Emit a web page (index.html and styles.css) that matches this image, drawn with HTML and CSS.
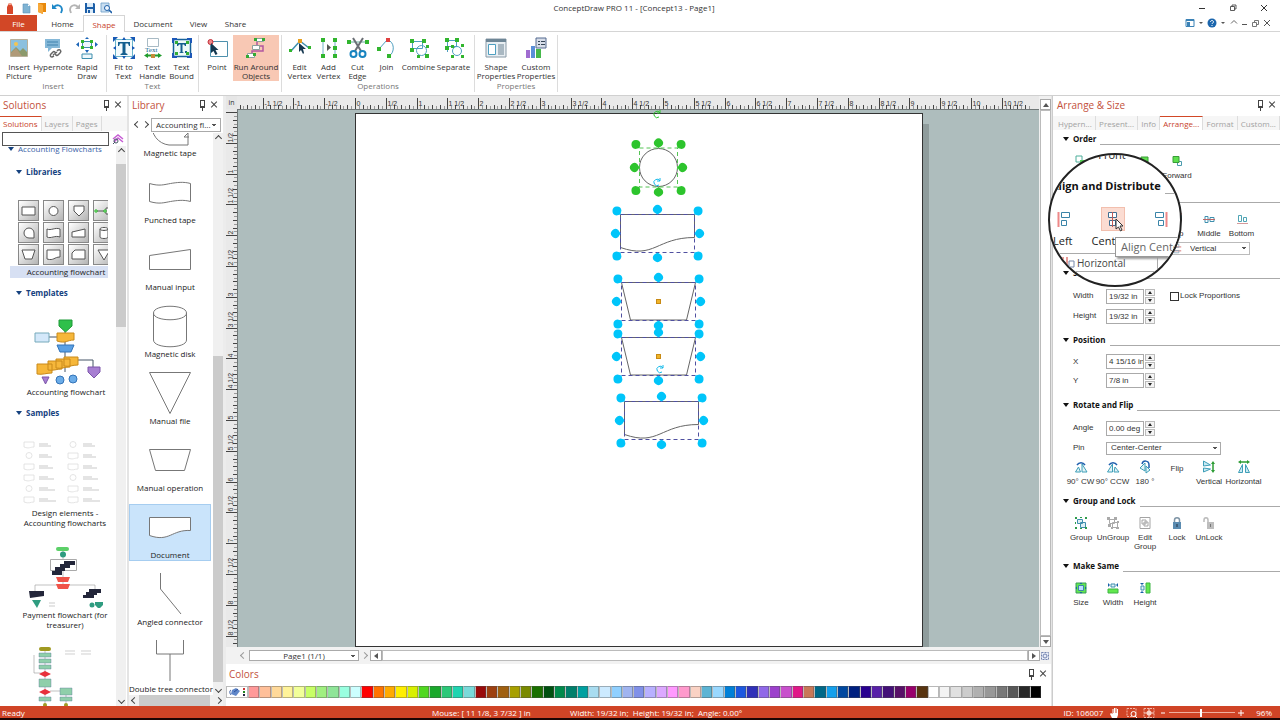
FILE: index.html
```html
<!DOCTYPE html>
<html lang="en">
<head>
<meta charset="UTF-8">
<meta name="viewport" content="width=device-width, initial-scale=1.0">
<title>ConceptDraw PRO 11 - [Concept13 - Page1]</title>
<link rel="stylesheet" href="styles.css">
</head>
<body>

<header class="titlebar">
    <div class="quick">
        <svg viewBox="0 0 12 12"><path d="M3 5l2-4h2l2 4v7H3z" fill="#d8472b"/><path d="M5 1h2l.6 2H4.4z" fill="#f3a08c"/></svg>
        <svg viewBox="0 0 12 12"><path d="M3 2h5l2 2v7H3z" fill="#7fb3d3" stroke="#5a92b8" stroke-width=".6"/><path d="M8 2v2h2z" fill="#fff"/></svg>
        <svg viewBox="0 0 12 12"><path d="M2 1h8v9H7v2L2 10z" fill="#e8890c"/><path d="M2 1l5 2v9l-5-2z" fill="#f7a93a"/></svg>
        <svg viewBox="0 0 12 12"><path d="M2 5c3-3 8-2 8 3l-1 3" fill="none" stroke="#1e88c8" stroke-width="1.8"/><path d="M0 2v5h5z" fill="#1e88c8"/></svg>
        <svg viewBox="0 0 12 12"><path d="M10 5C7 2 2 3 2 8l1 3" fill="none" stroke="#b4b4b4" stroke-width="1.8"/><path d="M12 2v5H7z" fill="#b4b4b4"/></svg>
        <svg viewBox="0 0 12 12"><path d="M1 1h9l1 1v9H1z" fill="#1d5fa8"/><path d="M3 1h6v4H3zM3 7h6v4H3z" fill="#dcebf8"/><path d="M4 8h2v3H4z" fill="#1d5fa8"/></svg>
        <svg viewBox="0 0 12 12"><path d="M1 1h8v9H1z" fill="#c9def0" stroke="#6b9cc6" stroke-width=".8"/><circle cx="7" cy="6" r="2.5" fill="#eef6ff" stroke="#1d5fa8"/><path d="M9 8l3 3" stroke="#1d5fa8" stroke-width="1.6"/></svg>
    </div>
    <div class="title">ConceptDraw PRO 11 - [Concept13 - Page1]</div>
    <div class="winctl">
        <button aria-label="Minimize"><svg viewBox="0 0 8 8"><path d="M1 4.5h6" stroke="#333"/></svg></button>
        <button aria-label="Restore"><svg viewBox="0 0 8 8"><path d="M1.5 2.5h4v4h-4zM3 2.500V1h4v4H5.500" fill="none" stroke="#333" stroke-width=".8"/></svg></button>
        <button aria-label="Close"><svg viewBox="0 0 8 8"><path d="M1 1l6 6M7 1L1 7" stroke="#333"/></svg></button>
    </div>
</header>

<nav class="menu">
    <a href="#" class="file">File</a>
    <a href="#">Home</a>
    <a href="#" class="active">Shape</a>
    <a href="#" class="long">Document</a>
    <a href="#">View</a>
    <a href="#">Share</a>
    <div class="menu-right">
        <svg viewBox="0 0 10 10"><path d="M1 1.500h8v7H1z" fill="#fff" stroke="#3b82b6"/><path d="M1 1h8v2H1zM2 4h3v4H2z" fill="#3b82b6"/></svg>
        <svg viewBox="0 0 10 10"><path d="M3 4h4L5 6z" fill="#555"/></svg>
        <svg viewBox="0 0 10 10"><circle cx="5" cy="5" r="4.500" fill="#1c66ad"/><path d="M3.500 4c0-2 3-2 3 0 0 1-1.500 1-1.500 2M5 7v1" fill="none" stroke="#fff"/></svg>
        <svg viewBox="0 0 10 10"><path d="M3 4h4L5 6z" fill="#555"/></svg>
        <svg viewBox="0 0 10 10"><path d="M2 5.500l3-3 3 3" fill="none" stroke="#666"/></svg>
        <svg viewBox="0 0 10 10"><path d="M2 6.500h5" stroke="#555"/></svg>
        <svg viewBox="0 0 10 10"><path d="M1.500 4.500h4v4h-4zM3.500 4.500v-2h4v4h-2" fill="none" stroke="#777"/></svg>
        <svg viewBox="0 0 10 10"><path d="M2 2l6 6M8 2L2 8" stroke="#555"/></svg>
    </div>
</nav>

<div class="ribbon">
    <div class="group insert">
        <div class="tools">
            <button><svg viewBox="0 0 22 22"><path d="M2.500 2.500h17v17h-17z" fill="#8cc0de" stroke="#b9b09a"/><circle cx="8" cy="7" r="2" fill="#f5c451"/><path d="M3 19v-4l5-5 4 4 3-3 4 4v4z" fill="#8c9a6c"/><path d="M3 19v-3l5-5 6 8z" fill="#b09a78"/></svg>Insert Picture</button>
            <button><svg viewBox="0 0 22 22"><path d="M3 2h15v9H10l-4 4v-4H3z" fill="#85b8d8"/><path d="M5 5h11M5 8h11" stroke="#3e82ae"/><path d="M12 19l-2 1c-2 0-2-2-1-3l2-2c1-1 3 0 2 2M14 17c-1 1 1 2 2 1l2-2c2-2 0-4-2-3l-1 1M11 18l4-3" fill="none" stroke="#666" stroke-width="1.500"/></svg>Hypernote</button>
            <button><svg viewBox="0 0 22 22"><path d="M6.500 4.500h9v6h-9zM6 17h10v4.500H6z" fill="#eef8fc" stroke="#3f8fae"/><path d="M5 3h3v3H5zM14 3h3v3h-3zM5 9h3v3H5zM14 9h3v3h-3z" fill="#31b52e"/><path d="M9 2h4l-2-2zM9 13h4l-2 3zM3 5v5L0 7.500zM19 5v5l3-2.500z" fill="#1d66b8"/></svg>Rapid Draw</button>
        </div>
        <div class="caption">Insert</div>
    </div>
    <div class="group">
        <div class="tools">
            <button><svg viewBox="0 0 22 22"><path d="M2.500 2.500h17v17h-17z" fill="#f4fbfd" stroke="#6ab5cc"/><path d="M5 5h12v4h-1l-1-2.500h-2.500V16l2 1v1H7.500v-1l2-1V6.500H7L6 9H5z" fill="#145f8f"/><path d="M0 0h5L0 5zM22 0v5l-5-5zM0 22v-5l5 5zM22 22h-5l5-5z" fill="#1759b5"/><path d="M9 3h4l-2-3zM9 19h4l-2 3zM0 11l3-2v4zM22 11l-3-2v4z" fill="#1759b5"/></svg>Fit to Text</button>
            <button><svg viewBox="0 0 22 22"><path d="M5.500 1.500h11v8h-11z" fill="#fff" stroke="#a8bac4"/><text x="3" y="15" class="mini-t">Text</text><path d="M4 18.500h14" stroke="#229c2e" stroke-width="2"/><path d="M2 18.500L6 16v5zM20 18.500L16 16v5z" fill="#229c2e"/><path d="M9 17h4v4H9z" fill="#c48c3a"/></svg>Text Handle</button>
            <button><svg viewBox="0 0 22 22"><path d="M2.500 2.500h17v17h-17z" fill="#edfaf8" stroke="#17629a" stroke-width="1.500"/><path d="M6 6h9v3h-1l-1-1.500h-1.500V15l1.500 1H8l1.500-1V7.500H8L7 9H6zM14 14h2v2h-2z" fill="#145f8f"/><path d="M1 1h5v2H3v3H1zM21 1v5h-2V3h-3V1zM1 21v-5h2v3h3v2zM21 21h-5v-2h3v-3h2z" fill="#1d58b8"/><path d="M4 4h3v3H4zM15 4h3v3h-3zM4 15h3v3H4zM15 15h3v3h-3z" fill="#33ae35"/></svg>Text Bound</button>
        </div>
        <div class="caption">Text</div>
    </div>
    <div class="group">
        <div class="tools">
            <button class="w32"><svg viewBox="0 0 22 22"><path d="M4.500 4.500h17v15h-17z" fill="#fff" stroke="#4e90ad"/><circle cx="4.500" cy="5" r="2.500" fill="#e88" stroke="#c22f3a"/><path d="M5 6v10l2.500-2 2 4 2-1-2-4h3z" fill="#14374f"/></svg>Point</button>
            <button class="w46 on"><svg viewBox="0 0 22 22"><path d="M17 3h-5v6h6v5H7v4H4" fill="none" stroke="#b157a0" stroke-width="1.500"/><path d="M11.500 1.500h7v3h-7zM7.500 8.500h7v4h-7zM2.500 16.500h7v4h-7z" fill="#fff" stroke="#8ca09c"/><path d="M9 1h3v3H9zM17 1h3v3h-3zM1 18h3v3H1zM8 16h3v3H8z" fill="#32aa33"/></svg>Run Around Objects</button>
        </div>
    </div>
    <div class="group ops">
        <div class="tools">
            <button><svg viewBox="0 0 22 22"><path d="M2 14L11 4l9 7" fill="none" stroke="#3f8fae" stroke-width="1.500"/><path d="M0 12h3v3H0zM19 9h3v3h-3z" fill="#31b52e"/><path d="M9 2h4v4H9z" fill="#e8a020"/><path d="M10 6v9l2-2 2 4 1-1-1-4h3z" fill="#14374f"/></svg>Edit Vertex</button>
            <button><svg viewBox="0 0 22 22"><path d="M5 4v14M17 4v14" stroke="#74b1c8"/><path d="M9 7v7l4-3.500z" fill="#555"/><path d="M3 1h4v4H3zM15 1h4v4h-4zM3 17h4v4H3zM15 17h4v4h-4zM15 9h4v4h-4z" fill="#31b52e"/></svg>Add Vertex</button>
            <button><svg viewBox="0 0 22 22"><path d="M0 5h22" stroke="#6a9"/><path d="M6 1l8 13M16 1L8 14" stroke="#6b6f75" stroke-width="2"/><path d="M0 3h4v4H0zM18 3h4v4h-4z" fill="#31b52e"/><circle cx="6.500" cy="17" r="3" fill="none" stroke="#1784c0" stroke-width="2"/><circle cx="15.500" cy="17" r="3" fill="none" stroke="#1784c0" stroke-width="2"/></svg>Cut Edge</button>
            <button><svg viewBox="0 0 22 22"><path d="M3 12l8-9c8 1 8 13 2 16" fill="none" stroke="#4e9fc0"/><path d="M1 10h4v4H1zM11 17h4v4h-4z" fill="#31b52e"/><path d="M10 1h4v4h-4z" fill="#e04040"/></svg>Join</button>
            <button class="w34"><svg viewBox="0 0 22 22"><path d="M4.500 4.500h10v7h-10z" fill="none" stroke="#4e9fc0"/><circle cx="13.500" cy="13.500" r="5" fill="none" stroke="#4e9fc0"/><path d="M2 2h4v4H2zM14 2h4v4h-4zM2 11h4v4H2zM18 8h3v3h-3zM9 18h3v3H9zM17 17h4v4h-4z" fill="#31b52e"/></svg>Combine</button>
            <button class="w34"><svg viewBox="0 0 22 22"><path d="M4.500 3.500h9v6h-9zM4.500 9v6" fill="none" stroke="#4e9fc0"/><circle cx="14" cy="14" r="4.500" fill="none" stroke="#4e9fc0"/><path d="M2 1h4v4H2zM12 1h4v4h-4zM2 9h4v4H2zM18 7h3v3h-3zM8 8h3v3H8zM8 18h3v3H8zM18 18h3v3h-3z" fill="#31b52e"/></svg>Separate</button>
        </div>
        <div class="caption">Operations</div>
    </div>
    <div class="group props">
        <div class="tools">
            <button class="w40"><svg viewBox="0 0 22 22"><path d="M1 2h20v18H1z" fill="#e8eef2" stroke="#8899a6"/><path d="M1 2h20v3H1z" fill="#6e8696"/><path d="M3.500 7.500h7v10h-7z" fill="#fff" stroke="#4e9fc0"/><path d="M13 7h6v11h-6z" fill="#a9b8c2"/></svg>Shape Properties</button>
            <button class="w40"><svg viewBox="0 0 22 22"><path d="M11 1h10v10H11z" fill="#d7dde8" stroke="#546a90"/><path d="M13 4h2v1h-2zM13 7h2v1h-2zM16 4h4v1h-4zM16 7h4v1h-4z" fill="#345"/><path d="M1 13h4v8H1z" fill="#a06cd0"/><path d="M6 9h4v12H6z" fill="#5a8fd8"/><path d="M11 12h5v9h-5z" fill="#46b84a"/></svg>Custom Properties</button>
        </div>
        <div class="caption">Properties</div>
    </div>
</div>

<main class="work">
    <aside class="solutions">
        <div class="panel-head"><h2>Solutions</h2><button class="pin" aria-label="Pin"></button><button class="close" aria-label="Close"></button></div>
        <div class="tabs"><a href="#" class="sel">Solutions</a><a href="#">Layers</a><a href="#">Pages</a></div>
        <div class="search">
            <input type="text" aria-label="Search">
            <svg viewBox="0 0 12 12"><path d="M1 6l5-4 5 4M2 9l4-4 5 4" fill="none" stroke="#c65bd4" stroke-width="1.500"/><circle cx="4" cy="8" r="2" fill="none" stroke="#456"/><path d="M3 9l-2 2" stroke="#456"/></svg>
        </div>
        <div class="scroller">
            <div class="tree">
                <div class="branch top">Accounting Flowcharts</div>
                <div class="branch">Libraries</div>
                <div class="tiles" id="tiles"></div>
                <div class="name lit">Accounting flowchart</div>
                <div class="branch">Templates</div>
                <svg class="thumb tall" viewBox="0 0 80 68">
                    <path d="M37 8v40M20 19h10M45 42h20v10M37 48v6" fill="none" stroke="#456"/>
                    <path d="M31 2h13v6l-6.500 6-6.500-6z" fill="#2fc04a" stroke="#1f9a38"/>
                    <path d="M7 15h14v9H7z" fill="#d4e8fa" stroke="#7ab"/>
                    <path d="M29 15h17v7c-7 0-8 4-17 1z" fill="#f6b73a" stroke="#c98a1a"/>
                    <path d="M29 27h17l-3 7H32z" fill="#5aa0e4" stroke="#3474b8"/>
                    <path d="M36 39h14v8c-6 0-8 2-14 1zM28 41h14v8c-6 0-8 2-14 1zM20 43h14v8c-6 0-8 2-14 1zM9 46h15v9c-6 0-9 2-15 1z" fill="#f6b73a" stroke="#c98a1a"/>
                    <path d="M60 49h12v5l-6 6-6-6zM14 59h7l-3.500 7z" fill="#a77fd2" stroke="#7c55aa"/>
                    <circle cx="32" cy="62" r="4" fill="#6bace8" stroke="#3474b8"/><circle cx="45" cy="61" r="4" fill="#6bace8" stroke="#3474b8"/>
                </svg>
                <div class="name">Accounting flowchart</div>
                <div class="branch">Samples</div>
                <svg class="thumb design" viewBox="0 0 84 68" id="design"></svg>
                <div class="name two">Design elements - Accounting flowcharts</div>
                <svg class="thumb pay" viewBox="0 0 80 62">
                    <path d="M10 45v-6h60v6M38 4v36" fill="none" stroke="#999" stroke-width=".6"/>
                    <rect x="31" y="1" width="13" height="4" rx="2" fill="#5cd068"/><circle cx="38" cy="8.500" r="3" fill="#2f9c80"/>
                    <path d="M25.500 13.500h26v11h-26z" fill="#fff" stroke="#aaa"/>
                    <path d="M39 15h11v4H39zM35 18h10v4H35zM30 21h10v4H30zM27 25h10v4H27zM4 45h15v5L5 52zM64 43h12v4H64zM61 46h11v3H61zM58 49h11v3H58z" fill="#23263a"/>
                    <path d="M31 31h14l-2 5H33zM31 38h14l-2 5H33z" fill="#f05348"/>
                    <path d="M7 54h9l-4 8zM70 56h8v3l-4 4-4-4z" fill="#2f9c80"/><circle cx="67" cy="59" r="2.500" fill="#2f9c80"/><path d="M24 57h6M24 60h6" stroke="#aaa" stroke-width=".6"/>
                </svg>
                <div class="name two">Payment flowchart (for treasurer)</div>
                <svg class="thumb last" viewBox="0 0 80 60">
                    <path d="M20 2v58M9 9v18h9M25 45h16v12" fill="none" stroke="#999" stroke-width=".6"/>
                    <rect x="14" y="1" width="12" height="4" rx="2" fill="#a09a22"/>
                    <path d="M14 7h12v4H14zM14 13h12v4H14zM14 19h12v4H14zM14 33h12v8H14zM14 51h12v4H14zM35 42h12v7H35zM35 51h12v4H35z" fill="#8fcfaa" stroke="#579" stroke-width=".4"/>
                    <path d="M14 28l6-3 6 3-6 3zM14 46l6-3 6 3-6 3z" fill="#e8303c"/>
                    <circle cx="20" cy="59" r="2" fill="#a09a22"/><circle cx="41" cy="59" r="2" fill="#a09a22"/>
                    <path d="M40 5h10M40 8h10M56 5h10M56 8h10" stroke="#bbb" stroke-width=".7"/>
                </svg>
            </div>
            <div class="vbar s1"><button class="up" aria-label="Up"></button><i></i><button class="down" aria-label="Down"></button></div>
        </div>
    </aside>

    <aside class="library">
        <div class="panel-head"><h2>Library</h2><button class="pin" aria-label="Pin"></button><button class="close" aria-label="Close"></button></div>
        <div class="libnav">
            <button class="left" aria-label="Previous"></button><button class="right" aria-label="Next"></button>
            <select aria-label="Library"><option>Accounting fl...</option></select>
        </div>
        <div class="scroller">
            <div class="shapes">
                <div class="shape"><svg viewBox="0 0 44 44"><path d="M41 29h-1v13H21A19 19 0 1 1 41 29l-5 5h5"/></svg>Magnetic tape</div>
                <div class="shape"><svg viewBox="0 0 44 44"><path d="M1.500 13.500c10 3 15 1 21 0s13-2 20 0v18c-7-2-14-1-20 0s-11 3-21 0z"/></svg>Punched tape</div>
                <div class="shape"><svg viewBox="0 0 44 44"><path d="M1.500 18.500l41-6v20h-41z"/></svg>Manual input</div>
                <div class="shape"><svg viewBox="0 0 44 44"><path d="M5.500 9v27c0 9 33 9 33 0V9c0-9-33-9-33 0 0 9 33 9 33 0"/></svg>Magnetic disk</div>
                <div class="shape"><svg viewBox="0 0 44 44"><path d="M1.500 1.500h41l-20.500 41z"/></svg>Manual file</div>
                <div class="shape"><svg viewBox="0 0 44 44"><path d="M1.500 11.500h41l-6 21h-29z"/></svg>Manual operation</div>
                <div class="shape picked"><svg viewBox="0 0 44 44"><path d="M1.500 12.500h41v13c-19-1-21 12-41 5z" fill="#fff"/></svg>Document</div>
                <div class="shape"><svg viewBox="0 0 44 44"><path d="M12.500 1v16L33 42" fill="none"/></svg>Angled connector</div>
                <div class="shape"><svg viewBox="0 0 44 44"><path d="M8.500 1v14h27V1M22 15v27" fill="none"/></svg>Double tree connector</div>
            </div>
            <div class="vbar s2"><button class="up" aria-label="Up"></button><i></i><button class="down" aria-label="Down"></button></div>
        </div>
        <div class="hbar"><button class="left" aria-label="Left"></button><i></i><button class="right" aria-label="Right"></button></div>
    </aside>

    <section class="center">
        <div class="drawing">
            <div class="unit">in</div>
            <svg class="hruler" id="hruler"></svg>
            <div class="vbar box"><button class="up" aria-label="Up"></button><i></i><button class="down" aria-label="Down"></button></div>
            <svg class="vruler" id="vruler"></svg>
            <svg class="canvas" id="canvas"></svg>
        </div>
        <div class="pagebar">
            <button class="left" aria-label="Previous page"></button>
            <select aria-label="Page"><option>Page1 (1/1)</option></select>
            <button class="right" aria-label="Next page"></button>
            <div class="track"><button aria-label="Scroll left"><svg viewBox="0 0 8 8"><path d="M6 1v6L2 4z" fill="#555"/></svg></button><span></span><button aria-label="Scroll right"><svg viewBox="0 0 8 8"><path d="M2 1v6l4-3z" fill="#555"/></svg></button></div>
            <svg class="fit" viewBox="0 0 10 10"><path d="M1.500 1.500h7v7h-7z" fill="#e7ecf7" stroke="#7484b0" stroke-dasharray="2 1"/><circle cx="5" cy="5" r="2" fill="none" stroke="#7484b0"/></svg>
        </div>
        <div class="colors">
            <div class="panel-head"><h2>Colors</h2><button class="pin" aria-label="Pin"></button><button class="close" aria-label="Close"></button></div>
            <div class="palette">
                <button class="fill" aria-label="Fill"><svg viewBox="0 0 20 10"><path d="M5 3l4-2 4 3-4 5-5-2z" fill="#5f86c8"/><path d="M4 3c-2 1-1 4 0 5M7 5l4-3" fill="none" stroke="#2c509a"/><path d="M16 1h2v2h-2z" fill="#c33"/><path d="M16 4h2v2h-2z" fill="#282"/><path d="M16 7h2v2h-2z" fill="#224"/></svg></button>
                <div class="swatches" id="swatches"></div>
            </div>
        </div>
    </section>

    <aside class="arrange">
        <div class="panel-head"><h2>Arrange &amp; Size</h2><button class="pin" aria-label="Pin"></button><button class="close" aria-label="Close"></button></div>
        <div class="tabs"><a href="#">Hypern...</a><a href="#">Present...</a><a href="#">Info</a><a href="#" class="sel">Arrange...</a><a href="#">Format</a><a href="#">Custom...</a></div>

        <section class="order">
            <h3>Order</h3>
            <div class="cells">
                <button aria-label="Back"><svg viewBox="0 0 14 14"><path d="M2 2h6v6H2z" fill="#fff" stroke="#4cae9a"/><path d="M6 6h6v6H6z" fill="#58cf58"/></svg></button>
                <span></span>
                <button aria-label="Backward"><svg viewBox="0 0 14 14"><path d="M3 3h7v7H3z" fill="#5ee04e" stroke="#3a9c38"/></svg></button>
                <button><svg viewBox="0 0 14 14"><path d="M7.500 7.500h4v4h-4z" fill="#fff" stroke="#4c9cae"/><path d="M3 2.500h6v6H3z" fill="#5ee04e" stroke="#3a9c38"/></svg>Forward</button>
            </div>
        </section>

        <section class="align">
            <h3>Align and Distribute</h3>
            <div class="cells">
                <span></span><span></span><span></span>
                <button><svg viewBox="0 0 14 14"><path d="M2 2h10" stroke="#c55"/><path d="M3.500 3.500h3v6h-3zM8.500 3.500h3v4h-3z" fill="none" stroke="#3f8fae"/></svg>Top</button>
                <button><svg viewBox="0 0 14 14"><path d="M3 4.500h3v6H3zM8 5.500h4v4H8z" fill="none" stroke="#3f8fae"/><path d="M1 7.500h12" stroke="#b66"/></svg>Middle</button>
                <button><svg viewBox="0 0 14 14"><path d="M3.500 3.500h3v6h-3zM8.500 5.500h3v4h-3z" fill="none" stroke="#4fa5b5"/><path d="M2 11.500h11" stroke="#d59a9a"/></svg>Bottom</button>
            </div>
            <div class="distribute">
                <div class="combo"><svg viewBox="0 0 14 14"><path d="M1 5h12M1 10h12" stroke="#c55"/><path d="M4 1.500h6v4H4zM4 9.500h6v3H4z" fill="none" stroke="#8ab"/></svg><select aria-label="Distribute vertically"><option>Vertical</option></select></div>
            </div>
        </section>

        <section class="size">
            <h3>Size</h3>
            <div class="field"><label for="width">Width</label><span class="spin"><input id="width" value="19/32 in"><i><button aria-label="Up"></button><button aria-label="Down"></button></i></span><label class="lock"><input type="checkbox">Lock Proportions</label></div>
            <div class="field"><label for="height">Height</label><span class="spin"><input id="height" value="19/32 in"><i><button aria-label="Up"></button><button aria-label="Down"></button></i></span></div>
        </section>

        <section class="position">
            <h3>Position</h3>
            <div class="field"><label for="posx">X</label><span class="spin"><input id="posx" value="4 15/16 in"><i><button aria-label="Up"></button><button aria-label="Down"></button></i></span></div>
            <div class="field"><label for="posy">Y</label><span class="spin"><input id="posy" value="7/8 in"><i><button aria-label="Up"></button><button aria-label="Down"></button></i></span></div>
        </section>

        <section class="rotate">
            <h3>Rotate and Flip</h3>
            <div class="field"><label for="angle">Angle</label><span class="spin"><input id="angle" value="0.00 deg"><i><button aria-label="Up"></button><button aria-label="Down"></button></i></span></div>
            <div class="field"><label for="pin">Pin</label><select id="pin"><option>Center-Center</option></select></div>
            <div class="cells">
                <button><svg viewBox="0 0 14 14"><path d="M1.500 12l3-5 2 5zM8 12V4l5 8z" fill="#e3f4f8" stroke="#3f9fb8"/><path d="M3 5c2-3 6-3 8 0" fill="none" stroke="#1f5fae" stroke-width="1.500"/></svg>90° CW</button>
                <button><svg viewBox="0 0 14 14"><path d="M1.500 12l5-8v8zM8 12l1-5 4 5z" fill="#e3f4f8" stroke="#3f9fb8"/><path d="M3 5c2-3 6-3 8 0" fill="none" stroke="#1f5fae" stroke-width="1.500"/></svg>90° CCW</button>
                <button><svg viewBox="0 0 14 14"><path d="M2 8l5-5v8zM8 6v7l4-3z" fill="#e3f4f8" stroke="#3f9fb8"/><path d="M4 4c1-4 7-4 7 1v3" fill="none" stroke="#1f5fae" stroke-width="1.500"/></svg>180 °</button>
                <span class="word">Flip</span>
                <button><svg viewBox="0 0 14 14"><path d="M1.500 1v5l7-1zM1.500 12V8l7 1z" fill="#c9eaf4" stroke="#3f9fb8"/><path d="M11 3v8" stroke="#2c9c34" stroke-width="1.500"/><path d="M9 4h4l-2-3zM9 10h4l-2 3z" fill="#2c9c34"/></svg>Vertical</button>
                <button><svg viewBox="0 0 14 14"><path d="M1.500 12.500l4-8v8zM12.500 12.500l-4-8v8z" fill="#c9eaf4" stroke="#3f9fb8"/><path d="M3 2h8" stroke="#2c9c34" stroke-width="1.500"/><path d="M4 0v4L1 2zM10 0v4l3-2z" fill="#2c9c34"/></svg>Horizontal</button>
            </div>
        </section>

        <section class="grouping">
            <h3>Group and Lock</h3>
            <div class="cells">
                <button><svg viewBox="0 0 14 14"><path d="M3.500 3.500h5v4h-5zM6.500 6.500h5v5h-5z" fill="#dff1f4" stroke="#3f8fae"/><path d="M1 1h2v2H1zM6 1h2v1H6zM11 1h2v2h-2zM1 11h2v2H1zM11 11h2v2h-2zM1 6h1v2H1zM6 12h2v1H6z" fill="#2d9c4a"/></svg>Group</button>
                <button><svg viewBox="0 0 14 14"><path d="M3.500 3.500h5v4h-5zM6.500 6.500h5v5h-5z" fill="none" stroke="#aaa"/><path d="M1 1h3v3H1zM8 1h3v3H8zM2 8h3v3H2zM11 5h2v2h-2zM10 11h3v2h-3zM5 11h2v2H5z" fill="#aaa"/></svg>UnGroup</button>
                <button><svg viewBox="0 0 14 14"><path d="M2 1.500h10v11H2zM4 4h4v4H4zM6 6h4v4H6z" fill="none" stroke="#a4a4a4"/></svg>Edit<br>Group</button>
                <button><svg viewBox="0 0 14 14"><path d="M4.500 6V4c0-3 5-3 5 0v2" fill="none" stroke="#7f95a6" stroke-width="1.500"/><path d="M3 6h8v7H3z" fill="#5b8bb0"/><path d="M6.500 8h1v3h-1z" fill="#234"/></svg>Lock</button>
                <button><svg viewBox="0 0 14 14"><path d="M2 6V4c0-3 4-3 4 0v2" fill="none" stroke="#bbb" stroke-width="1.500"/><path d="M5 6h7v7H5z" fill="#bdbdbd"/><path d="M8 8h1v3H8z" fill="#777"/></svg>UnLock</button>
            </div>
        </section>

        <section class="same">
            <h3>Make Same</h3>
            <div class="cells">
                <button><svg viewBox="0 0 14 14"><path d="M2 2h10v10H2z" fill="#62e84e" stroke="#3a9c5a"/><path d="M4.500 4.500h5v5h-5z" fill="#bdf" stroke="#3c86a8"/><path d="M5.500 3h3L7 1.500zM5.500 11h3L7 12.500zM3 5.500v3L1.500 7zM11 5.500v3L12.500 7z" fill="#1760a8"/></svg>Size</button>
                <button><svg viewBox="0 0 14 14"><path d="M2 8h10v4H2z" fill="#62e84e" stroke="#3fb545"/><path d="M5 3h4v3H5z" fill="#e3f4f8" stroke="#3f8fae"/><path d="M2 2v4l2-2zM12 2v4l-2-2z" fill="#1760a8"/></svg>Width</button>
                <button><svg viewBox="0 0 14 14"><path d="M8 2h4v10H8z" fill="#62e84e" stroke="#3fb545"/><path d="M3 5h3v4H3z" fill="#e3f4f8" stroke="#3f8fae"/><path d="M2 2h4L4 4zM2 12h4l-2-2z" fill="#1760a8"/></svg>Height</button>
            </div>
        </section>

        <div class="lens">
            <div class="lens-front">Front</div>
            <div class="lens-title">Align and Distribute</div>
            <div class="lens-icons">
                <span><svg viewBox="0 0 18 18"><path d="M2.500 2v15" stroke="#e88" stroke-width="2"/><path d="M5.500 2.500h8v5h-8zM5.500 10.500h5v5h-5z" fill="#fff" stroke="#3a84a8"/></svg></span>
                <span class="hot"><svg viewBox="0 0 18 18"><path d="M4.500 2.500h8v5h-8zM5.500 10.500h6v5h-6z" fill="#fff" stroke="#3f6f92"/><path d="M8.500 2v15" stroke="#c25a55"/></svg></span>
                <span><svg viewBox="0 0 18 18"><path d="M14.500 2v15" stroke="#e88" stroke-width="2"/><path d="M3.500 2.500h8v5h-8zM6.500 10.500h5v5h-5z" fill="#fff" stroke="#3a84a8"/></svg></span>
            </div>
            <div class="lens-labels"><span>Left</span><span>Center</span></div>
            <div class="lens-combo"><svg viewBox="0 0 16 16"><path d="M4 2v12M8 2v12" stroke="#e07a74" stroke-width="1.500"/><path d="M10 6h5v6h-5z" fill="#fff" stroke="#78a"/></svg>Horizontal</div>
            <div class="tip">Align Center</div>
            <svg class="cursor" viewBox="0 0 10 14"><path d="M1 1v10l2.500-2 2 4 1.500-1-2-4h3z" fill="#fff" stroke="#333"/></svg>
        </div>
    </aside>
</main>

<footer class="status">
    <span>Ready</span>
    <span>Mouse: [ 11 1/8, 3 7/32 ] in</span>
    <span class="dims">Width: 19/32 in;&nbsp; Height: 19/32 in;&nbsp; Angle: 0.00°</span>
    <span class="ident">ID: 106007</span>
    <svg viewBox="0 0 12 12"><path d="M3 11L1 7l1-1 1.500 1V2h1v4h.5V1h1v5h.5V1h1v5H8V2h1v6l-1 3z" fill="#fff"/></svg>
    <svg viewBox="0 0 12 12"><path d="M1 1.500h9v8H1z" fill="none" stroke="#f3b5a6" stroke-dasharray="2 1"/><circle cx="7.500" cy="7" r="2.500" fill="none" stroke="#fff"/><path d="M9 9l2 2" stroke="#fff"/></svg>
    <svg viewBox="0 0 12 12"><path d="M1 1.500h10v9H1z" fill="none" stroke="#f3b5a6" stroke-dasharray="2 1"/><circle cx="6" cy="6" r="2.500" fill="#f9d3ca"/><path d="M6 1v10M1 6h10" stroke="#f9d3ca"/></svg>
    <button aria-label="Zoom out"><svg viewBox="0 0 6 6"><path d="M1 3h4" stroke="#fff"/></svg></button>
    <input type="range" min="0" max="100" value="48" aria-label="Zoom">
    <button aria-label="Zoom in"><svg viewBox="0 0 6 6"><path d="M0 3h6M3 0v6" stroke="#fff"/></svg></button>
    <span class="pct">96%</span>
</footer>

<script src="script.js"></script>
</body>
</html>
```

FILE: styles.css
```css
* {
    box-sizing: border-box;
}
html, body {
    height: 100%;
}
body {
    margin: 0;
    display: flex;
    flex-direction: column;
    font: 8px/10px "Open Sans", "Noto Sans", sans-serif;
    color: #333;
    background-color: #fff;
    border-bottom: 2px solid #1c0503;
    overflow: hidden;
}
a {
    color: inherit;
    text-decoration: none;
}
button {
    padding: 0;
    border: 0;
    background: none;
    font: inherit;
    color: inherit;
}
input, select {
    margin: 0;
    font: inherit;
    color: inherit;
}
select {
    appearance: none;
    background-color: #fff;
    background-image: linear-gradient(#555, #555), linear-gradient(#555, #555);
    background-repeat: no-repeat;
    background-position: right 3px top 4px, right 4px top 5px;
    background-size: 4px 1px, 2px 1px;
    border: 1px solid #aaa;
    border-radius: 0;
    padding: 0 4px;
}
h2, h3 {
    margin: 0;
}
svg {
    display: block;
}

/* title and menu */
.titlebar {
    display: grid;
    grid-template-columns: 1fr auto 1fr;
    align-items: center;
    height: 15px;
    padding-right: 12px;
}
.quick {
    display: flex;
    gap: 4px;
    padding-left: 4px;
}
.quick svg {
    width: 12px;
    height: 12px;
}
.winctl {
    display: flex;
    justify-content: flex-end;
    gap: 23px;
}
.winctl svg {
    width: 8px;
    height: 8px;
}
.menu {
    display: flex;
    align-items: stretch;
    height: 17px;
    border-bottom: 1px solid #d5d5d5;
    line-height: 18px;
}
.menu a {
    width: 37px;
    text-align: center;
}
.menu .file {
    background-color: #d24726;
    color: #fff;
    margin-right: 7px;
}
.menu .active {
    width: 42px;
    height: 17px;
    margin: 0 2px;
    background-color: #fff;
    border: 1px solid #d5d5d5;
    border-bottom: 0;
    color: #c8432a;
    line-height: 17px;
}
.menu .long {
    width: 52px;
    margin-right: 1px;
}
.menu-right {
    display: flex;
    align-items: center;
    gap: 1px;
    margin-left: auto;
    padding-right: 8px;
}
.menu-right svg {
    width: 10px;
    height: 10px;
}

/* ribbon */
.ribbon {
    display: flex;
    height: 64px;
    padding-top: 3px;
    border-bottom: 1px solid #d0d0d0;
}
.group {
    height: 57px;
    padding: 0 2px;
    border-right: 1px solid #dcdcdc;
}
.ops {
    padding: 0 3px;
}
.props {
    padding: 0 1px;
}
.tools {
    display: flex;
    height: 46px;
}
.tools button {
    display: flex;
    flex-direction: column;
    align-items: center;
    width: 29px;
    padding-top: 2px;
    line-height: 9px;
}
.tools svg {
    width: 22px;
    height: 22px;
    margin-bottom: 3px;
}
.insert .tools button {
    width: 34px;
}
.tools .w32 {
    width: 32px;
}
.tools .w34 {
    width: 35px;
}
.tools .w40 {
    width: 40px;
}
.tools .w46 {
    width: 46px;
}
.tools .on {
    background-color: #f8c8b4;
}
.mini-t {
    font: 7px "Liberation Serif", serif;
    fill: #145f8f;
}
.caption {
    text-align: center;
    color: #777;
}

/* docked panels */
.work {
    flex: 1;
    display: flex;
    min-height: 0;
}
.panel-head {
    display: flex;
    align-items: center;
    height: 20px;
    padding: 0 4px 3px 3px;
}
.panel-head h2 {
    flex: 1;
    font-size: 10px;
    font-weight: 400;
    line-height: 16px;
    color: #c3513c;
}
.pin, .close {
    position: relative;
    width: 11px;
    height: 10px;
}
.pin::before {
    content: "";
    display: block;
    width: 3px;
    height: 5px;
    margin: 0 auto;
    border: 1px solid #444;
    border-bottom-width: 2px;
}
.pin::after {
    content: "";
    display: block;
    width: 1px;
    height: 3px;
    margin: 0 auto;
    background-color: #444;
}
.close::before, .close::after {
    content: "";
    position: absolute;
    left: 2px;
    top: 4px;
    width: 8px;
    height: 1px;
    background-color: #444;
    transform: rotate(45deg);
}
.close::after {
    transform: rotate(-45deg);
}
.tabs {
    display: flex;
    height: 15px;
    color: #a2a2a2;
    line-height: 14px;
    background-color: #f6f6f6;
}
.tabs a {
    padding: 1px 3px 0;
    border-right: 1px solid #ddd;
    white-space: nowrap;
}
.tabs .sel {
    padding-top: 0;
    border-top: 1px solid #d24726;
    background-color: #fff;
    color: #c8432a;
}
.scroller {
    flex: 1;
    display: flex;
    min-height: 0;
}

/* scroll bars */
.vbar {
    display: flex;
    flex-direction: column;
    width: 10px;
    background-color: #f0f0f0;
}
.vbar button, .hbar button {
    width: 10px;
    height: 11px;
}
.vbar i, .hbar i {
    background-color: #cbcbcb;
}
.vbar .down {
    margin-top: auto;
}
.up::before, .down::before, .left::before, .right::before {
    content: "";
    display: block;
    width: 4px;
    height: 4px;
    margin: 2px auto;
    border: solid #444;
    border-width: 1px 0 0 1px;
    transform: rotate(45deg);
}
.down::before {
    transform: rotate(225deg);
}
.left::before {
    transform: rotate(-45deg);
}
.right::before {
    transform: rotate(135deg);
}
.hbar {
    display: flex;
    height: 11px;
    background-color: #f0f0f0;
}
.hbar i {
    flex: 1;
    margin-right: 3px;
}

/* solutions */
.solutions {
    display: flex;
    flex-direction: column;
    width: 129px;
    border-right: 2px solid #e4e4e4;
}
.search {
    display: flex;
    align-items: center;
    gap: 3px;
    padding: 1px 0 0 2px;
}
.search input {
    width: 107px;
    height: 14px;
    border: 1px solid #555;
}
.search svg {
    width: 12px;
    height: 12px;
}
.tree {
    flex: 1;
    overflow: hidden;
    padding-left: 10px;
}
.tree .branch {
    display: flex;
    align-items: center;
    height: 11px;
    padding-left: 6px;
    font-weight: 700;
    color: #15427f;
}
.tree .branch::before {
    content: "";
    margin-right: 4px;
    border: 3px solid transparent;
    border-top: 4px solid #15427f;
    border-bottom: 0;
}
.tree .branch.top {
    margin: -3px 0 12px -8px;
    font-weight: 400;
    color: #3a63a8;
}
.tiles {
    display: grid;
    grid-template-columns: repeat(4, 21px);
    gap: 1px 4px;
    width: 90px;
    height: 65px;
    margin: 23px 0 1px 8px;
    overflow: hidden;
}
.tiles svg {
    width: 21px;
    height: 21px;
    border: 1px solid #888;
    background-image: linear-gradient(135deg, #fff, #b4b4b4);
    fill: #fff;
    stroke: #555;
}
.name {
    height: 12px;
    margin-right: 8px;
    padding-left: 14px;
    text-align: center;
    line-height: 12px;
    color: #222;
    white-space: nowrap;
}
.name.lit {
    background-color: #d7e0f3;
    margin-bottom: 9px;
}
.name.two {
    height: 21px;
    margin-right: 0;
    padding-left: 4px;
    line-height: 10px;
    white-space: normal;
}
.thumb {
    width: 80px;
    margin-left: 18px;
}
.tall {
    height: 68px;
    margin-top: 20px;
}
.tall + .name {
    margin-bottom: 9px;
}
.design {
    width: 84px;
    height: 68px;
    margin: 20px 0 2px 12px;
}
.pay {
    height: 62px;
    margin: 17px 0 2px 15px;
}
.last {
    height: 60px;
    margin: 15px 0 0 15px;
}
.solutions .vbar {
    margin-right: 1px;
}
.s1 i {
    height: 163px;
    margin-top: 7px;
}

/* library */
.library {
    display: flex;
    flex-direction: column;
    width: 97px;
    border-right: 3px solid #ececec;
}
.libnav {
    display: flex;
    align-items: center;
    height: 17px;
    padding: 0 2px 0 4px;
}
.libnav button {
    width: 8px;
}
.libnav select {
    flex: 1;
    min-width: 0;
    height: 14px;
    margin-left: 2px;
    background-position: right 4px top 5px, right 5px top 6px;
}
.shapes {
    flex: 1;
    overflow: hidden;
}
.shape {
    height: 57px;
    margin: 0 2px 10px 0;
    padding-top: 1px;
    text-align: center;
    line-height: 12px;
    color: #222;
    white-space: nowrap;
}
.shape:first-child {
    margin-top: -31px;
}
.shape svg {
    width: 44px;
    height: 44px;
    margin: 0 auto;
    fill: none;
    stroke: #777;
}
.picked {
    background-color: #cae4fb;
    outline: 1px solid #a6cdf0;
    outline-offset: -1px;
}
.s2 i {
    height: 326px;
    margin-top: 212px;
}

/* drawing area */
.center {
    flex: 1;
    display: flex;
    flex-direction: column;
    min-width: 0;
    border-right: 1px solid #e4e4e4;
}
.drawing {
    flex: 1;
    display: grid;
    grid-template-columns: 11px 1fr 12px;
    grid-template-rows: 13px 1fr;
    min-height: 0;
}
.unit {
    font-size: 7px;
    line-height: 14px;
    text-align: center;
    background-color: #e6e6e6;
}
.hruler, .vruler, .canvas {
    width: 100%;
    height: 100%;
    overflow: hidden;
}
.hruler, .vruler {
    background-color: #e9e9e9;
    font: 7px "Liberation Sans", sans-serif;
    fill: #333;
}
.canvas {
    background-color: #aebdbd;
    border: solid #707878;
    border-width: 1px 0 0 1px;
}
.drawing .box {
    grid-row: 1 / 3;
    grid-column: 3;
    width: auto;
    padding: 3px 0 0 1px;
}
.box button {
    width: 11px;
    border: 1px solid #aaa;
    background-color: #fff;
}
.box .up::before, .box .down::before {
    width: 0;
    height: 0;
    margin: 2px auto;
    border: 3px solid transparent;
    border-bottom: 4px solid #555;
    border-top: 0;
    transform: none;
}
.box .down::before {
    transform: rotate(180deg);
}
.box i {
    flex: 1;
    background-color: #fff;
    border: 1px solid #bbb;
}
.pagebar {
    display: flex;
    align-items: center;
    height: 17px;
    padding: 0 1px 0 12px;
    background-color: #f2f2f2;
}
.pagebar > button {
    width: 11px;
    opacity: .5;
}
.pagebar select {
    width: 110px;
    height: 11px;
    text-align: center;
    line-height: 9px;
}
.track {
    flex: 1;
    display: flex;
    height: 11px;
}
.track button {
    width: 12px;
    border: 1px solid #aaa;
    background-color: #fff;
}
.track svg {
    width: 8px;
    height: 8px;
    margin: 0 auto;
}
.track span {
    flex: 1;
    border: 1px solid #bbb;
    background-color: #fff;
}
.fit {
    width: 10px;
    height: 10px;
}
.colors {
    height: 42px;
    background-color: #fff;
}
.colors .panel-head {
    padding-right: 3px;
    padding-bottom: 0;
}
.palette {
    display: flex;
    height: 12px;
    margin-top: 2px;
    padding-right: 10px;
}
.fill {
    width: 22px;
    border: 1px solid #bbb;
}
.fill svg {
    width: 20px;
    height: 10px;
}
.swatches {
    flex: 1;
    display: flex;
}
.swatches button {
    flex: 1;
    border: 1px solid rgba(80, 80, 80, .4);
    border-left-color: #bbb;
}

/* shapes on the page */
.outline {
    fill: none;
    stroke: #666;
}
.frame {
    fill: none;
    stroke: #5050a0;
    stroke-dasharray: 4 3;
}
.grip {
    fill: #00c5fa;
}
.turn {
    fill: none;
    stroke: #12b9ea;
}
.main .frame {
    stroke: #55c455;
}
.main .grip {
    fill: #2dc42d;
}
.main .turn {
    stroke: #2dc42d;
}
.center-dot {
    fill: #f0b429;
    stroke: #c88a14;
}

/* arrange and size */
.arrange {
    position: relative;
    width: 228px;
    border-left: 1px solid #ccc;
}
.arrange .panel-head {
    padding-left: 4px;
    padding-right: 3px;
}
.arrange .tabs {
    height: 14px;
    margin-bottom: 3px;
    padding-left: 2px;
    justify-content: space-between;
}
.arrange section {
    font-family: "Liberation Sans", Arial, sans-serif;
}
.arrange h3 {
    display: flex;
    align-items: center;
    gap: 4px;
    height: 12px;
    padding-left: 10px;
    font-family: "Open Sans", "Noto Sans", sans-serif;
    font-size: 8px;
    color: #111;
}
.arrange h3::before {
    content: "";
    border: 3px solid transparent;
    border-top: 4px solid #111;
    border-bottom: 0;
}
.arrange h3::after {
    content: "";
    flex: 1;
    align-self: flex-end;
    height: 1px;
    background-color: #aaa;
}
.cells {
    display: grid;
    grid-template-columns: repeat(5, 32px) 33px;
    padding-left: 12px;
}
.cells button {
    display: flex;
    flex-direction: column;
    align-items: center;
    justify-self: center;
    align-self: start;
    width: 32px;
    line-height: 9px;
    white-space: nowrap;
}
.cells svg {
    width: 14px;
    height: 14px;
    margin-bottom: 3px;
}
.rotate .cells {
    grid-template-columns: 31px 33px repeat(3, 32px) 37px;
    padding-top: 2px;
}
.word {
    padding-top: 4px;
    text-align: center;
}
.order {
    height: 58px;
}
.order .cells {
    padding-top: 9px;
}
.align {
    height: 76px;
}
.align .cells {
    padding-top: 9px;
}
.distribute {
    display: flex;
    justify-content: flex-end;
    padding: 4px 30px 0 0;
}
.combo {
    display: flex;
    width: 80px;
    height: 13px;
    border: 1px solid #bbb;
}
.combo svg {
    width: 11px;
    height: 11px;
}
.combo select {
    flex: 1;
    border: 0;
    padding-left: 8px;
}
.size {
    height: 67px;
}
.position {
    height: 65px;
}
.rotate {
    height: 96px;
}
.grouping {
    height: 65px;
}
.field {
    display: flex;
    align-items: center;
    height: 20px;
    padding-left: 20px;
}
h3 + .field {
    margin-top: 7px;
}
.position .field {
    height: 19px;
}
.position h3 + .field {
    margin-top: 6px;
}
.field > label:first-child {
    width: 33px;
}
.field select {
    width: 115px;
    height: 13px;
}
.spin {
    display: flex;
    gap: 1px;
}
.spin input {
    width: 38px;
    height: 15px;
    padding: 0 0 0 2px;
    border: 1px solid #aaa;
}
.spin i {
    display: flex;
    flex-direction: column;
    justify-content: space-between;
}
.spin i button {
    width: 10px;
    height: 7px;
    border: 1px solid #bbb;
    background-color: #f4f4f4;
}
.spin i button::before {
    content: "";
    display: block;
    width: 0;
    margin: 0 auto;
    border: 2px solid transparent;
    border-top: 0;
    border-bottom: 3px solid #222;
}
.spin i button + button::before {
    border-top: 3px solid #222;
    border-bottom: 0;
}
.lock {
    display: flex;
    align-items: center;
    gap: 1px;
    margin-left: 15px;
}
.lock input {
    appearance: none;
    width: 9px;
    height: 9px;
    border: 1px solid #333;
}
.grouping .cells, .same .cells {
    padding-top: 9px;
}

/* magnifier over the align tools */
.lens {
    position: absolute;
    left: -5px;
    top: 57px;
    width: 134px;
    height: 134px;
    border: 2px solid #222;
    border-radius: 50%;
    overflow: hidden;
    background-color: #fff;
    font-size: 11px;
    line-height: 14px;
    color: #222;
}
.lens-front {
    height: 29px;
    margin-top: -7px;
    text-align: center;
    padding-right: 6px;
}
.lens-title {
    display: flex;
    align-items: center;
    gap: 4px;
    height: 17px;
    padding-left: 1px;
    font-weight: 700;
    white-space: nowrap;
    color: #111;
}
.lens-title::after {
    content: "";
    flex: 1;
    align-self: flex-end;
    height: 1px;
    background-color: #aaa;
}
.lens-icons {
    display: flex;
    gap: 24px;
    height: 39px;
    padding: 13px 0 0 3px;
}
.lens-icons span {
    display: grid;
    place-items: center;
    width: 24px;
    height: 24px;
}
.lens-icons svg {
    width: 18px;
    height: 18px;
}
.lens-icons .hot {
    background-color: #fbdcd2;
    border: 1px solid #f2bfae;
}
.lens-labels {
    display: flex;
    gap: 19px;
    height: 20px;
    padding-left: 3px;
    line-height: 16px;
}
.lens-combo {
    display: flex;
    align-items: center;
    gap: 2px;
    width: 108px;
    height: 19px;
    padding-left: 8px;
    border: 1px solid #aaa;
    font-size: 10px;
    color: #444;
}
.lens-combo svg {
    width: 16px;
    height: 16px;
}
.tip {
    position: absolute;
    left: 65px;
    top: 82px;
    height: 20px;
    padding: 0 5px;
    border: 1px solid #999;
    background-color: #fff;
    box-shadow: 2px 2px 2px #999;
    line-height: 18px;
    color: #666;
    white-space: nowrap;
}
.cursor {
    position: absolute;
    left: 65px;
    top: 63px;
    width: 10px;
    height: 14px;
}

/* status bar */
.status {
    display: flex;
    align-items: center;
    height: 12px;
    padding: 1px 8px 0 2px;
    background-color: #d04426;
    color: #fff;
    white-space: nowrap;
}
.status > span:first-child {
    width: 430px;
}
.status > span:nth-child(2) {
    width: 138px;
}
.status .dims {
    flex: 1;
}
.ident {
    margin-right: 6px;
}
.status > svg {
    width: 12px;
    height: 12px;
    margin-right: 5px;
}
.status button svg {
    width: 6px;
    height: 6px;
}
.status input {
    appearance: none;
    width: 66px;
    height: 8px;
    margin: 0 3px;
    background: linear-gradient(#f0b0a0, #f0b0a0) no-repeat center / 100% 1px;
}
.status input::-webkit-slider-thumb {
    appearance: none;
    width: 2px;
    height: 8px;
    background-color: #fff;
}
.pct {
    margin-left: 12px;
}
```

FILE: script.js
```js
var INCH = 61.6;

function label(n) {
    // n counts half inches
    var sign = n < 0 ? "-" : "";
    var a = Math.abs(n);
    var whole = Math.floor(a / 2);
    if (a % 2 === 0) return sign + whole;
    return sign + (whole ? whole + " " : "") + "1/2";
}

function ruler(id, origin, from, to, vertical) {
    var out = "", path = "", bold = "";
    for (var i = from * 8; i <= to * 8 + 7; i++) {
        var p = Math.round(origin + i * INCH / 16) + 0.5;
        var size = i % 8 === 0 ? 11 : i % 2 === 0 ? 4 : 3;
        if (vertical) {
            if (i % 2 === 0) bold += "M11 " + p + "h-" + size;
            else path += "M11 " + p + "h-" + size;
        } else {
            if (i % 2 === 0) bold += "M" + p + " 13v-" + size;
            else path += "M" + p + " 13v-" + size;
        }
        if (i % 8 === 0 && p > 4) {
            out += vertical
                ? '<text transform="translate(7 ' + (p - 1) + ') rotate(-90)">' + label(i / 8) + "</text>"
                : '<text x="' + (p + 1) + '" y="10">' + label(i / 8) + "</text>";
        }
    }
    document.getElementById(id).innerHTML =
        '<path d="' + path + '" stroke="#999"/><path d="' + bold + '" stroke="#444"/>' + out;
}
ruler("hruler", 118, -4, 21, false);
ruler("vruler", 3, 0, 17, true);

function frame(x, y, w, h) {
    var out = '<rect class="frame" x="' + x + '" y="' + y + '" width="' + w + '" height="' + h + '"/>';
    var grips = [
        [0, 0, -45], [0.5, 0, 0], [1, 0, 45], [1, 0.5, 90],
        [1, 1, 135], [0.5, 1, 180], [0, 1, 225], [0, 0.5, 270]
    ];
    grips.forEach(function (g) {
        out += '<path class="grip" d="M0 0L-3.500-2.200A4.500 4.500 0 1 1 3.500-2.200Z" transform="translate(' +
            (x + g[0] * w) + " " + (y + g[1] * h) + ") rotate(" + g[2] + ')"/>';
    });
    return out;
}
function doc(x, y) {
    return '<path class="outline" d="M' + x + " " + y + 'h74v23c-38 0-40 22-74 10z"/>' + frame(x, y, 74, 38);
}
function trapezoid(x, y) {
    return '<path class="outline" d="M' + x + " " + y + 'h74l-9 37.500h-56z"/>' + frame(x, y, 74, 38) +
        '<rect class="center-dot" x="' + (x + 35) + '" y="' + (y + 17) + '" width="4" height="4"/>';
}
function turn(x, y) {
    return '<path class="turn" d="M' + (x + 3) + " " + (y - 1) + 'a3.200 3.200 0 1 0-1 4M' + (x + 3) + " " + (y - 4) + 'v3h-3"/>';
}

document.getElementById("canvas").innerHTML =
    '<g transform="translate(118 3)">' +
    '<rect x="6" y="11" width="567" height="533" fill="#8f9c9c"/>' +
    '<rect x="-.5" y=".5" width="567" height="533" fill="#fff" stroke="#333"/>' +
    '<g class="main"><circle class="outline" cx="302.500" cy="54.500" r="19"/>' + frame(283.5, 35, 38, 39) + turn(301, 1) + "</g>" +
    turn(301, 69) +
    doc(264.5, 101.5) + trapezoid(265.5, 169.5) + trapezoid(265.5, 224.5) + turn(304, 256) +
    doc(268.5, 288.5) +
    "</g>";

var colors = ("ff9999 ffbf99 ffd999 fff399 f2ff99 c8ff66 a0f080 8fe598 99ffe0 ccffff " +
    "ff0000 ff7300 ffaa00 ffee00 d8f000 50d820 1aa82c 2bc878 20d4b0 7adada " +
    "990a0a 9e4010 a06010 a8a000 7a8a00 1a7000 005010 008a4c 00806c 00a0a0 " +
    "a8dcf0 cceaff 90d0ff a0b4f0 8090e8 b8b0ff dca8ff ff99ff ff99cc fad2c4 " +
    "5cb4d4 99d8ff 0080d8 1c58e0 3030b8 9068e8 9c40cc c850cc e01888 c87858 " +
    "006888 14a0ec 0048a0 002080 280090 5820a8 441078 581068 98006c 583410 " +
    "ffffff f3f3f3 e0e0e0 cccccc b0b0b0 989898 787878 585858 282828 000000").split(" ");
document.getElementById("swatches").innerHTML = colors.map(function (c) {
    return '<button aria-label="#' + c + '" style="background-color: #' + c + '"></button>';
}).join("");

var tiles = [
    "M3 6h13v8H3z", "M14 10a4.500 4.500 0 1 1-9 0 4.500 4.500 0 1 1 9 0", "M5 5h10v5l-5 5-5-5z", "M2 10h9M12 7h7v6h-7z",
    "M15 10a5 5 0 1 0-5 5h5z", "M3 6c4 2 8-2 13 0v8c-5-2-9 2-13 0z", "M3 9l13-3v8H3z", "M6 6c0-2 8-2 8 0v8c0 2-8 2-8 0zc0 2 8 2 8 0",
    "M3 5h13l-3 9H6z", "M3 5h13v7c-6 0-6 4-13 2z", "M6 5h10v9H3V8z", "M4 5h12l-6 10z"
];
document.getElementById("tiles").innerHTML = tiles.map(function (d, i) {
    var dots = i === 3 ? '<path d="M1 9h2v2H1zM10 9h2v2h-2z" stroke="#2b2"/>' : "";
    return '<svg viewBox="0 0 19 19"><path d="' + d + '"/>' + dots + "</svg>";
}).join("");

// faint sheet of design elements
var sheet = "";
for (var r = 0; r < 6; r++) {
    for (var c = 0; c < 2; c++) {
        var x = 2 + c * 44, y = 4 + r * 11;
        var kind = (r + c) % 3;
        sheet += kind === 1
            ? '<circle cx="' + (x + 5) + '" cy="' + (y + 2.5) + '" r="3"/>'
            : '<path d="M' + x + " " + y + 'h10v5c-4 0-5 2-10 0z"/>';
        sheet += '<path d="M' + (x + 15) + " " + (y + 2) + "h9m-9 2h" + (12 + r) + '" stroke="#bbb" stroke-width=".8"/>';
    }
}
document.getElementById("design").innerHTML = '<g fill="none" stroke="#ddd" stroke-width=".8">' + sheet + "</g>";
```
